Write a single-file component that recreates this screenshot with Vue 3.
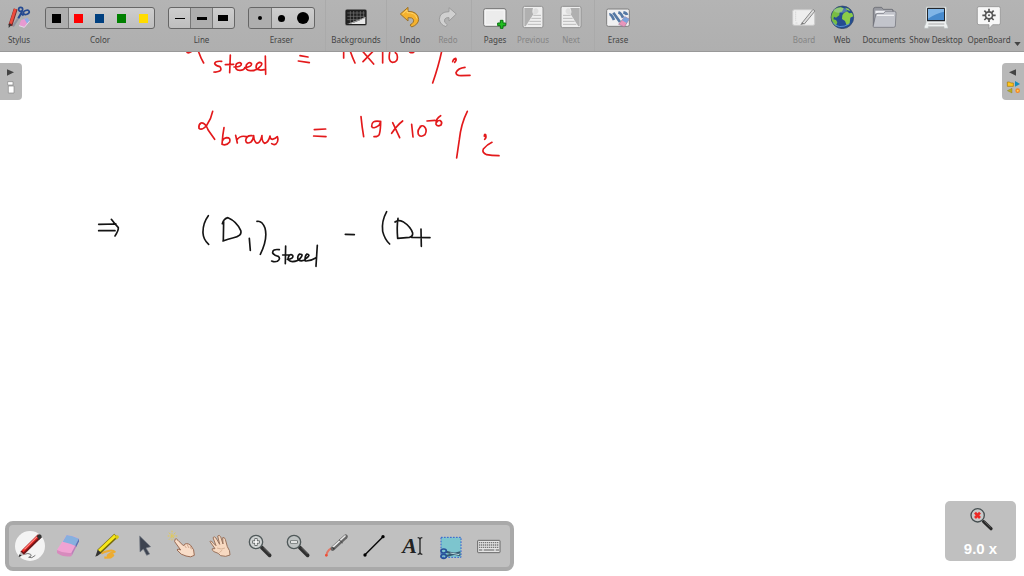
<script setup>
import { ref } from 'vue'

const colors = ['#000000', '#ff0000', '#004080', '#008000', '#ffdc00']
const color = ref(0)
const line = ref(1)
const eraser = ref(0)
const tool = ref('Pen')
</script>

<template>
  <div class="board">
    <header class="bar">
      <button class="item" type="button">
        <svg viewBox="0 0 84 72" aria-hidden="true">
          <path d="M50 24 L24 64" stroke="#8d939e" stroke-width="6" />
          <path d="M38 18 L55 42" stroke="#a9adb8" stroke-width="5" />
          <circle cx="47" cy="13" r="6" fill="none" stroke="#254a91" stroke-width="5" />
          <ellipse cx="64" cy="22" rx="9" ry="6" fill="none" stroke="#254a91" stroke-width="5" transform="rotate(-20 64 22)" />
          <path d="M52 18 L40 40 M48 25 L56 31" stroke="#254a91" stroke-width="6" />
          <path d="M16 62 L32 12" stroke="#7d2a2b" stroke-width="12" />
          <path d="M17 56 L31 12" stroke="#ed4b3c" stroke-width="8" />
          <path d="M11 56 L20 59 L11 69Z" fill="#333" />
          <path d="M48 46 L66 39 L74 48 L58 68 L42 62Z" fill="#e79ad1" />
          <path d="M58 42 L67 38 L74 48 L67 57Z" fill="#8faee8" />
          <path d="M42 62 L58 67 L74 48" fill="none" stroke="#dedee5" stroke-width="3" />
        </svg>
        <span>Stylus</span>
      </button>

      <div class="group palette-colors" role="group" aria-label="Color">
        <div class="segments">
          <button v-for="(c, i) in colors" :key="c" type="button" :class="{ on: color === i }" :aria-label="'Color ' + (i + 1)" @click="color = i">
            <i class="swatch" :style="{ background: c }"></i>
          </button>
        </div>
        <span>Color</span>
      </div>

      <div class="group" role="group" aria-label="Line">
        <div class="segments">
          <button v-for="n in 3" :key="n" type="button" :class="{ on: line === n - 1 }" :aria-label="'Line ' + n" @click="line = n - 1">
            <i :class="['stroke', 'stroke-' + n]"></i>
          </button>
        </div>
        <span>Line</span>
      </div>

      <div class="group" role="group" aria-label="Eraser">
        <div class="segments">
          <button v-for="n in 3" :key="n" type="button" :class="{ on: eraser === n - 1 }" :aria-label="'Eraser ' + n" @click="eraser = n - 1">
            <i :class="['dot', 'dot-' + n]"></i>
          </button>
        </div>
        <span>Eraser</span>
      </div>

      <div class="section">
        <button class="item wide" type="button">
          <svg viewBox="0 0 84 72" aria-hidden="true">
            <rect x="9" y="13" width="66" height="49" rx="6" fill="#777" />
            <rect x="11" y="14" width="62" height="46" rx="4" fill="#202020" />
            <path d="M16 24H68 M16 34H68 M16 44H50 M25 18V54 M35 18V54 M45 18V52 M55 18V46 M65 18V40" stroke="#777" stroke-width="2" fill="none" />
            <path d="M14 57 Q43 54 70 36 V57Z" fill="#e8e8e8" />
            <path d="M22 56 Q48 46 70 38" stroke="#aaa" stroke-width="3" fill="none" />
          </svg>
          <span>Backgrounds</span>
        </button>
      </div>

      <div class="section">
        <button class="item" type="button">
          <svg viewBox="0 0 84 72" aria-hidden="true">
            <path d="M13 27 L36 7 V19 Q66 19 68 43 Q67 59 47 66 L42 60 Q56 52 52 43 Q49 37 36 38 V48Z" fill="#f5b22e" stroke="#9c722a" stroke-width="3" stroke-linejoin="round" />
            <path d="M20 27 L33 15 V23 Q58 22 63 41" fill="none" stroke="#ffd46b" stroke-width="3" />
          </svg>
          <span>Undo</span>
        </button>
        <button class="item off" type="button" disabled>
          <svg viewBox="0 0 84 72" aria-hidden="true">
            <path d="M67 27 L45 8 V20 Q17 20 16 43 Q18 59 36 65 L40 59 Q28 52 32 43 Q35 37 45 38 V48Z" fill="#d0d0d0" stroke="#9c9c9c" stroke-width="3" stroke-linejoin="round" />
          </svg>
          <span>Redo</span>
        </button>
      </div>

      <div class="section">
        <button class="item" type="button">
          <svg viewBox="0 0 84 72" aria-hidden="true">
            <rect x="8" y="11" width="67" height="53" rx="6" fill="#f4f4f4" stroke="#747474" stroke-width="3" />
            <rect x="15" y="18" width="53" height="39" fill="#ececec" />
            <path d="M58 46 h8 v8 h8 v8 h-8 v8 h-8 v-8 h-8 v-8 h8Z" fill="#20be20" stroke="#0b7410" stroke-width="3" stroke-linejoin="round" />
          </svg>
          <span>Pages</span>
        </button>
        <button class="item off" type="button" disabled>
          <svg viewBox="0 0 84 72" aria-hidden="true">
            <rect x="12" y="4" width="60" height="64" rx="5" fill="#eee" stroke="#909090" stroke-width="3" />
            <path d="M16 9 H42 Q38 22 43 28 L20 64 H16Z" fill="#b0b0b0" />
            <path d="M44 12 Q54 7 58 15 Q60 25 50 28 L42 28" fill="#ddd" />
            <path d="M43 31H66 M37 40H66 M31 49H66 M26 58H66" stroke="#bbb" stroke-width="3" />
          </svg>
          <span>Previous</span>
        </button>
        <button class="item off" type="button" disabled>
          <svg viewBox="0 0 84 72" aria-hidden="true">
            <rect x="12" y="4" width="60" height="64" rx="5" fill="#eee" stroke="#909090" stroke-width="3" />
            <path d="M68 9 H40 Q46 22 41 28 L64 64 H68Z" fill="#b0b0b0" />
            <path d="M40 12 Q30 7 26 15 Q24 25 34 28 L42 28" fill="#ddd" />
            <path d="M18 31H41 M18 40H47 M18 49H53 M18 58H58" stroke="#bbb" stroke-width="3" />
          </svg>
          <span>Next</span>
        </button>
      </div>

      <div class="section">
        <button class="item" type="button">
          <svg viewBox="0 0 84 72" aria-hidden="true">
            <rect x="8" y="12" width="68" height="52" rx="5" fill="#f0f0f1" stroke="#7e7e7e" stroke-width="3" />
            <path d="M16 28 Q22 27 30 45 M28 23 L48 51 M43 22 Q52 25 57 38 M58 22 Q68 24 69 30" fill="none" stroke="#5578a4" stroke-width="8" />
            <path d="M62 35 L76 42 L61 66 L44 58Z" fill="#e895bb" stroke="#9a7592" stroke-width="2" />
            <path d="M62 35 L76 42 L68 54 L54 46Z" fill="#7ba4db" />
          </svg>
          <span>Erase</span>
        </button>
      </div>

      <nav class="modes" aria-label="Mode">
        <button class="item off" type="button" disabled>
          <svg viewBox="0 0 84 72" aria-hidden="true">
            <rect x="8" y="14" width="66" height="47" rx="5" fill="#eee" stroke="#c9c9c9" stroke-width="3" />
            <path d="M17 20V49 M17 54H24" stroke="#ccc" stroke-width="3" stroke-dasharray="3 3" />
            <path d="M36 54 L69 13 L75 18 L43 57Z" fill="#ddd" stroke="#888" stroke-width="3" />
            <path d="M31 60 L36 52 L42 57Z" fill="#777" />
          </svg>
          <span>Board</span>
        </button>
        <button class="item" type="button">
          <svg viewBox="0 0 84 72" aria-hidden="true">
            <circle cx="43" cy="37" r="34" fill="#244d91" stroke="#344563" stroke-width="2" />
            <path d="M12 27 Q16 9 38 6 L47 10 L42 20 L35 21 L34 31 L24 38 L18 35 L16 43 L24 45 L28 52 L24 62 Q9 51 10 34Z" fill="#79bd43" />
            <path d="M47 25 L57 19 L64 25 L72 24 L76 34 L67 38 L65 55 L56 61 L51 48 L42 42 L43 31Z" fill="#8bcb48" />
            <path d="M51 8 L62 11 L67 18 L57 15Z" fill="#91cb53" />
            <ellipse cx="37" cy="16" rx="20" ry="8" fill="#d7eaff" opacity=".28" />
            <path d="M14 52 Q31 75 64 57" fill="none" stroke="#6ba9ed" stroke-width="3" opacity=".7" />
          </svg>
          <span>Web</span>
        </button>
        <button class="item docs" type="button">
          <svg viewBox="0 0 84 72" aria-hidden="true">
            <path d="M10 63 V14 Q10 7 16 7 H35 L40 13 H66 Q70 13 70 20 V25 H20Z" fill="#9799a0" stroke="#5e5f66" stroke-width="2" />
            <path d="M16 17H66V26H16Z" fill="#eff0f4" />
            <path d="M17 30 Q18 25 24 25 H41 L46 19 H74 Q79 19 78 26 L76 63 Q76 67 70 67 H12 Q8 67 10 62Z" fill="#c2c4cb" stroke="#696b74" stroke-width="2" />
            <path d="M21 31H72" stroke="#eff0f2" stroke-width="4" />
          </svg>
          <span>Documents</span>
        </button>
        <button class="item desktop" type="button">
          <svg viewBox="0 0 84 72" aria-hidden="true">
            <path d="M15 5 H70 Q73 5 73 9 V54 L78 66 V70 H66 V65 H19 V70 H7 V65 L12 54 V9 Q12 5 15 5Z" fill="#edf0f0" stroke="#b6bcbc" stroke-width="2" />
            <rect x="15" y="8" width="54" height="41" rx="2" fill="#23272c" />
            <path d="M18 12H66V45H18Z" fill="#478acd" />
            <path d="M18 12H66V20Q43 24 18 41Z" fill="#80b5e7" />
            <path d="M19 57H67" stroke="#aaa" stroke-width="3" />
          </svg>
          <span>Show Desktop</span>
        </button>
        <button class="item app" type="button">
          <svg viewBox="0 0 84 72" aria-hidden="true">
            <path d="M12 5 H71 Q76 5 76 10 V54 Q76 59 71 59 H53 L42 71 V59 H12 Q7 59 7 54 V10 Q7 5 12 5Z" fill="#f7f7f7" stroke="#888" stroke-width="2" />
            <path d="M42 11V51 M22 31H62 M28 17L56 45 M56 17L28 45" stroke="#555" stroke-width="5" />
            <circle cx="42" cy="31" r="13" fill="#555" />
            <circle cx="42" cy="31" r="8" fill="#f7f7f7" />
            <circle cx="42" cy="31" r="3" fill="#555" />
          </svg>
          <span>OpenBoard</span>
        </button>
        <svg class="more" viewBox="0 0 8 5" aria-hidden="true"><path d="M0 0H8L4 5Z" fill="#444" /></svg>
      </nav>
    </header>

    <main class="canvas">
      <svg class="ink" viewBox="0 52 560 240" role="img" aria-label="Handwritten thermal expansion working">
        <g class="red" transform="translate(180 50) scale(.3333)">
          <path d="M20 5 Q23 12 34 5 M55 3 Q62 24 71 39" />
          <path d="M125 34 Q105 32 104 41 Q107 48 120 50 Q127 60 117 64 Q110 67 102 66" />
          <path d="M151 15 L149 68 M136 44 L161 43 M162 51 Q185 52 184 41 Q179 34 169 42 Q162 61 180 61 Q190 61 196 53 M194 53 Q218 50 214 40 Q206 34 199 45 Q195 62 211 62 Q228 63 238 52 Q253 39 238 37 Q226 42 229 55 Q235 64 257 58 M256 18 L257 73" />
          <path d="M360 17 L384 21 M355 33 L388 38" />
          <path d="M98 184 Q94 206 79 228 Q65 242 57 235 Q55 224 63 219 Q75 216 85 241 L104 268" />
          <path d="M132 233 Q128 254 126 283 Q140 288 149 276 Q153 263 140 263 Q131 264 127 273" />
          <path d="M167 256 L172 279 M171 269 Q181 255 199 260 M216 257 Q200 255 197 271 Q199 284 213 276 Q219 271 221 257 Q221 271 229 279 Q240 282 246 257 Q245 275 254 280 Q266 277 270 258 Q270 267 277 268 Q287 266 292 260 Q297 273 288 282 Q282 286 275 281" />
          <path d="M403 239 L437 237 M401 258 L438 260" />
        </g>
        <g class="red" transform="translate(340 50) scale(.3333)">
          <path d="M11 4 V24 M31 4 Q37 22 45 39 M68 4 L101 42 M98 5 L69 35 M128 3 V39 M149 8 Q144 35 157 37 Q174 36 172 19 Q172 11 166 8 M209 6 Q215 10 221 7 M305 4 Q296 47 278 99" />
          <path d="M338 35 Q340 26 347 25 Q351 30 344 37 M375 52 Q354 54 348 68 Q348 76 363 77 L390 76" />
          <path d="M63 200 Q66 231 71 260 M119 214 Q94 210 95 229 Q99 239 117 226 Q121 220 122 214 Q122 239 118 253 Q114 261 102 260 M158 218 L179 263 M188 213 Q172 225 155 250 M215 223 L219 261" />
          <path d="M244 228 Q231 239 235 253 Q242 264 255 254 Q263 240 253 230 Q248 225 241 229 M261 213 L285 211 M302 197 Q287 205 288 223 Q293 231 303 225 Q308 216 301 212 Q294 210 290 217" />
          <path d="M382 184 Q363 222 358 269 L350 324 M433 259 Q433 251 437 254 Q440 264 434 268 M456 277 Q441 284 430 297 Q425 308 440 314 Q454 317 477 317" />
        </g>
        <g class="black" transform="translate(90 200) scale(.3333)">
          <path d="M26 73 L78 72 M26 92 L75 92 M64 58 Q73 70 85 83 Q86 91 75 108" />
          <path d="M355 47 Q338 70 339 99 Q340 119 356 133 M401 65 L400 121 M397 71 Q401 56 414 53 Q440 64 452 91 Q458 108 428 114 Q415 117 399 123 M478 115 L481 151 M501 64 Q516 61 525 84 Q534 117 511 163" />
          <path d="M568 149 Q547 146 548 159 Q553 167 565 169 Q573 177 562 184 Q554 187 545 183 M587 138 L586 191 M578 165 L600 165 M592 178 Q612 177 608 166 Q600 160 595 172 Q593 184 608 185 Q623 184 630 176 Q643 162 629 162 Q620 169 625 180 Q639 187 650 174 Q663 164 651 162 Q643 168 646 183 Q661 184 677 174 M682 136 L678 199" />
        </g>
        <g class="black" transform="translate(330 200) scale(.3333)">
          <path d="M46 103 L73 104 M170 35 Q154 64 158 94 Q164 118 179 132 M204 55 Q200 80 203 115 M195 66 Q205 58 219 65 Q242 80 248 99 Q249 110 238 112 L203 115 M245 112 L300 113 M273 87 L274 139" />
        </g>
      </svg>

      <button class="tab left" type="button" aria-label="Open pages panel">
        <svg viewBox="0 0 66 111" aria-hidden="true">
          <path d="M21 19 L42 28 L21 38Z" fill="#444" />
          <path d="M23 56H39V66H23Z M25 69H42V90H25Z" fill="#fff" stroke="#858585" stroke-width="2" />
        </svg>
      </button>
      <button class="tab right" type="button" aria-label="Open library panel">
        <svg viewBox="0 0 66 111" aria-hidden="true">
          <path d="M42 19 L21 28 L42 38Z" fill="#444" />
          <path d="M16 57 h7 l3 3 h8 v10 H16Z" fill="#ffc51d" stroke="#a87900" stroke-width="2" />
          <path d="M39 54 L54 63 L39 71Z" fill="#128dc0" />
          <path d="M30 76 V90 L16 83Z" fill="#bcac20" stroke="#75700e" stroke-width="1" />
          <circle cx="47" cy="83" r="7" fill="#f48925" />
          <circle cx="47" cy="83" r="3" fill="#ffd15c" />
        </svg>
      </button>

      <div class="zoom">
        <svg viewBox="0 0 84 78" aria-hidden="true">
          <path d="M50 44 L72 65" stroke="#282828" stroke-width="10" stroke-linecap="round" />
          <path d="M52 43 L71 61" stroke="#777" stroke-width="2" />
          <circle cx="32" cy="25" r="20" fill="#c9c9c9" stroke="#454e50" stroke-width="4" />
          <path d="M24 17 L39 33 M39 17 L24 33" stroke="#ed2926" stroke-width="8" />
        </svg>
        <output>9.0 x</output>
      </div>

      <div class="palette" role="toolbar" aria-label="Drawing tools">
        <button type="button" aria-label="Pen" @click="tool = 'Pen'">
          <svg viewBox="0 0 96 96">
            <circle v-if="tool === 'Pen'" cx="48" cy="48" r="45" fill="#f4f4f4" />
            <path d="M31 73 Q43 68 50 73 Q56 78 44 82 Q53 87 64 76" fill="none" stroke="#777" stroke-width="3" />
            <path d="M24 70 L77 18" stroke="#6e171a" stroke-width="14" />
            <path d="M26 64 L74 17" stroke="#f02b25" stroke-width="8" />
            <path d="M31 58 L70 19" stroke="#fff" stroke-width="2" />
            <path d="M20 65 L30 75 L14 80Z" fill="#bbb" />
            <path d="M68 19 L75 13 Q84 14 83 22 L76 29Z" fill="#353535" />
            <path d="M17 73 L14 81 L23 77Z" fill="#222" />
          </svg>
        </button>
        <button type="button" aria-label="Eraser" @click="tool = 'Eraser'">
          <svg viewBox="0 0 96 96">
            <path d="M44 15 Q62 17 81 26 L58 77 Q36 80 15 67 V59Z" fill="#f0a3d3" />
            <path d="M44 15 Q62 17 81 26 L72 49 Q56 40 32 35Z" fill="#86b0df" />
            <path d="M15 60 Q34 71 58 69 V79 Q32 82 15 69Z" fill="#d78bbd" />
            <path d="M58 69 L81 26 V34 L59 78Z" fill="#bb80b8" />
            <path d="M71 45 L81 26 V34 L72 52Z" fill="#5275b5" />
          </svg>
        </button>
        <button type="button" aria-label="Highlighter" @click="tool = 'Highlighter'">
          <svg viewBox="0 0 96 96">
            <path d="M31 70 Q64 56 70 65 Q36 82 61 76 Q73 73 59 82 L40 83" fill="none" stroke="#edac31" stroke-width="7" />
            <path d="M24 65 L75 17" stroke="#75690c" stroke-width="15" />
            <path d="M24 63 L73 17" stroke="#f7e81a" stroke-width="9" />
            <path d="M71 20 L77 15 Q84 16 84 22 L77 29Z" fill="#d9c810" />
            <path d="M20 59 L31 69 L22 76 L13 80Z" fill="#343434" />
          </svg>
        </button>
        <button type="button" aria-label="Select" @click="tool = 'Select'">
          <svg viewBox="0 0 96 96"><path d="M32 18 L65 50 L51 54 L62 72 L53 76 L43 57 L33 66Z" fill="#3d4350" stroke="#737984" stroke-width="2" /></svg>
        </button>
        <button type="button" aria-label="Interact" @click="tool = 'Interact'">
          <svg viewBox="0 0 96 96">
            <path d="M15 2V34 M2 18H31 M6 8L25 29 M25 8L6 29" stroke="#e4ca4e" stroke-width="3" stroke-dasharray="5 3" />
            <path d="M24 28 Q27 23 33 31 L49 47 Q57 35 71 46 Q83 58 82 76 Q72 84 57 78 Q42 76 30 60 Q30 54 41 60 L23 35Z" fill="#f9ddc8" stroke="#986b55" stroke-width="3" />
            <path d="M51 44 L58 54 M60 43 L66 54 M70 49 L73 58" stroke="#b98970" stroke-width="2" />
          </svg>
        </button>
        <button type="button" aria-label="Scroll page" @click="tool = 'Scroll'">
          <svg viewBox="0 0 96 96">
            <path d="M30 56 L15 35 Q16 30 24 38 L33 47 L24 23 Q27 17 33 24 L44 43 L38 18 Q42 13 47 20 L54 42 L53 23 Q58 20 61 28 L67 50 Q76 62 75 75 Q63 82 47 77 Q42 69 27 65 Q19 60 22 56Z" fill="#f7d9c1" stroke="#9a745e" stroke-width="3" stroke-linejoin="round" />
            <path d="M36 54 Q49 60 60 54 M43 68 L52 60" fill="none" stroke="#c9a083" stroke-width="2" />
          </svg>
        </button>
        <button type="button" aria-label="Zoom in" @click="tool = 'Zoom in'">
          <svg viewBox="0 0 96 96">
            <path d="M53 52 L77 76" stroke="#303030" stroke-width="11" stroke-linecap="round" />
            <path d="M58 53 L77 72" stroke="#777" stroke-width="2" />
            <circle cx="36" cy="36" r="20" fill="#d0d3d3" stroke="#50595a" stroke-width="4" />
            <path d="M36 25V47 M25 36H47" stroke="#4c5353" stroke-width="9" />
            <path d="M36 27V45 M27 36H45" stroke="#fff" stroke-width="5" />
          </svg>
        </button>
        <button type="button" aria-label="Zoom out" @click="tool = 'Zoom out'">
          <svg viewBox="0 0 96 96">
            <path d="M53 52 L77 76" stroke="#303030" stroke-width="11" stroke-linecap="round" />
            <path d="M58 53 L77 72" stroke="#777" stroke-width="2" />
            <circle cx="36" cy="36" r="20" fill="#bfc3c3" stroke="#50595a" stroke-width="4" />
            <path d="M25 36H47" stroke="#4c5353" stroke-width="9" />
            <path d="M27 36H45" stroke="#fff" stroke-width="5" />
          </svg>
        </button>
        <button type="button" aria-label="Laser pointer" @click="tool = 'Laser'">
          <svg viewBox="0 0 96 96">
            <path d="M42 53 Q23 55 19 76" fill="none" stroke="#e17765" stroke-width="6" />
            <circle cx="19" cy="76" r="4" fill="#ed4e36" />
            <path d="M38 56 L77 20" stroke="#666" stroke-width="13" stroke-linecap="round" />
            <path d="M38 52 L75 18" stroke="#e8e8e8" stroke-width="5" stroke-linecap="round" />
            <path d="M57 29 L68 39" stroke="#444" stroke-width="3" />
            <path d="M37 52 L43 58" stroke="#333" stroke-width="4" />
          </svg>
        </button>
        <button type="button" aria-label="Draw line" @click="tool = 'Line'">
          <svg viewBox="0 0 96 96"><path d="M21 74 L75 20" stroke="#050505" stroke-width="4" /><circle cx="21" cy="75" r="5" /><circle cx="75" cy="20" r="5" /></svg>
        </button>
        <button type="button" class="text-tool" aria-label="Write text" @click="tool = 'Text'">
          <span>A</span>
          <svg class="caret" viewBox="0 0 18 54" aria-hidden="true"><path d="M2 2Q9 2 9 8V46Q9 52 2 52 M16 2Q9 2 9 8 M9 46Q9 52 16 52" fill="none" stroke="#252525" stroke-width="4" /></svg>
        </button>
        <button type="button" aria-label="Capture" @click="tool = 'Capture'">
          <svg viewBox="0 0 96 96">
            <rect x="18" y="22" width="60" height="60" fill="#7dc5ce" stroke="#315ed0" stroke-width="3" stroke-dasharray="5 4" />
            <path d="M33 65 L76 76 M34 78 L76 67" stroke="#385870" stroke-width="6" />
            <path d="M46 69 L73 74" stroke="#bcd8dc" stroke-width="3" />
            <ellipse cx="26" cy="63" rx="8" ry="6" fill="none" stroke="#28509a" stroke-width="5" />
            <ellipse cx="26" cy="79" rx="8" ry="6" fill="none" stroke="#28509a" stroke-width="5" />
          </svg>
        </button>
        <button type="button" aria-label="Virtual keyboard">
          <svg viewBox="0 0 96 96">
            <rect x="14" y="31" width="67" height="37" rx="2" fill="#e4e4e4" stroke="#666" stroke-width="3" />
            <path d="M18 38H78 M18 45H78 M18 52H78" stroke="#777" stroke-width="4" stroke-dasharray="4 2" />
            <path d="M18 60H28 M32 60H64 M68 60H78" stroke="#888" stroke-width="4" />
          </svg>
        </button>
      </div>
    </main>
  </div>
</template>

<style>
body {
  margin: 0;
  background: #fff;
}
</style>

<style scoped>
.board {
  min-height: 100vh;
  display: flex;
  flex-direction: column;
  background: #fff;
  overflow: hidden;
  font-family: "Noto Sans", "Open Sans", sans-serif;
}
button {
  border: 0;
  padding: 0;
  margin: 0;
  background: none;
  font: inherit;
  color: inherit;
}
.bar {
  display: flex;
  height: 52px;
  box-sizing: border-box;
  background: linear-gradient(#b4b4b4, #afafaf);
  border-bottom: 1px solid #999;
  color: #444;
  font-size: 8px;
  line-height: 12px;
}
.item {
  width: 38px;
  padding-top: 5px;
  display: flex;
  flex-direction: column;
  align-items: center;
  gap: 5px;
  flex: none;
  white-space: nowrap;
}
.item svg {
  width: 28px;
  height: 24px;
}
.off {
  color: #858585;
}
.wide {
  width: 60px;
}
.group {
  display: flex;
  flex-direction: column;
  align-items: center;
  gap: 5px;
  padding-top: 7px;
  width: 67px;
  flex: none;
}
.group.palette-colors {
  width: 110px;
  margin-left: 7px;
}
.group + .group {
  margin-left: 13px;
}
.segments {
  display: flex;
  width: 100%;
  height: 22px;
  box-sizing: border-box;
  border: 1px solid #666;
  border-radius: 3px;
  overflow: hidden;
  background: linear-gradient(#cecece, #bebebe);
}
.segments button {
  flex: 1;
  display: flex;
  align-items: center;
  justify-content: center;
}
.segments .on {
  background: #aeaeae;
  box-shadow: 1px 0 #777, -1px 0 #777;
}
.swatch {
  width: 9px;
  height: 9px;
}
.stroke {
  width: 10px;
  background: #000;
}
.stroke-1 { height: 1px; }
.stroke-2 { height: 3px; }
.stroke-3 { height: 6px; }
.dot {
  border-radius: 50%;
  background: #000;
}
.dot-1 { width: 4px; height: 4px; }
.dot-2 { width: 7px; height: 7px; }
.dot-3 { width: 12px; height: 12px; }
.section {
  display: flex;
  padding: 0 4px;
  border-left: 1px solid #aaa;
}
.group + .section {
  padding: 0;
  margin-left: 10px;
}
.modes {
  display: flex;
  margin-left: auto;
}
.docs { width: 46px; }
.desktop { width: 58px; }
.app { width: 48px; }
.more {
  width: 7px;
  height: 4px;
  margin: 42px 3px 0 1px;
}
.canvas {
  position: relative;
  flex: 1;
}
.ink {
  display: block;
  width: 560px;
  height: 240px;
}
.ink path {
  fill: none;
  stroke-width: 5;
  stroke-linecap: round;
  stroke-linejoin: round;
}
.red { stroke: #e3191b; }
.black { stroke: #151515; }
.tab {
  position: absolute;
  top: 11px;
  width: 22px;
  height: 37px;
  background: #b8b8b8;
}
.tab svg {
  display: block;
  width: 22px;
  height: 37px;
}
.left {
  left: 0;
  border-radius: 0 4px 4px 0;
}
.right {
  right: 0;
  border-radius: 4px 0 0 4px;
}
.zoom {
  position: absolute;
  right: 8px;
  bottom: 15px;
  width: 71px;
  height: 60px;
  border-radius: 5px;
  background: #c0c0c0;
  display: flex;
  flex-direction: column;
  align-items: center;
  color: #fff;
  font: bold 15px/16px "Liberation Sans", Arial, sans-serif;
}
.zoom svg {
  width: 28px;
  height: 26px;
  margin: 6px 0 8px;
}
.palette {
  position: absolute;
  left: 5px;
  bottom: 5px;
  width: calc(100% - 10px);
  max-width: 509px;
  height: 50px;
  box-sizing: border-box;
  border: 4px solid #a9a9a9;
  border-radius: 8px;
  background: #c0c0c0;
  display: flex;
  justify-content: space-between;
  align-items: center;
  padding: 0 5px;
}
.palette button {
  width: 32px;
  height: 32px;
  display: flex;
  align-items: center;
  justify-content: center;
}
.palette svg {
  width: 32px;
  height: 32px;
}
.palette .text-tool {
  color: #222;
  font: italic bold 22px/24px "Liberation Serif", "Times New Roman", serif;
}
.palette .caret {
  width: 6px;
  height: 18px;
}
</style>
